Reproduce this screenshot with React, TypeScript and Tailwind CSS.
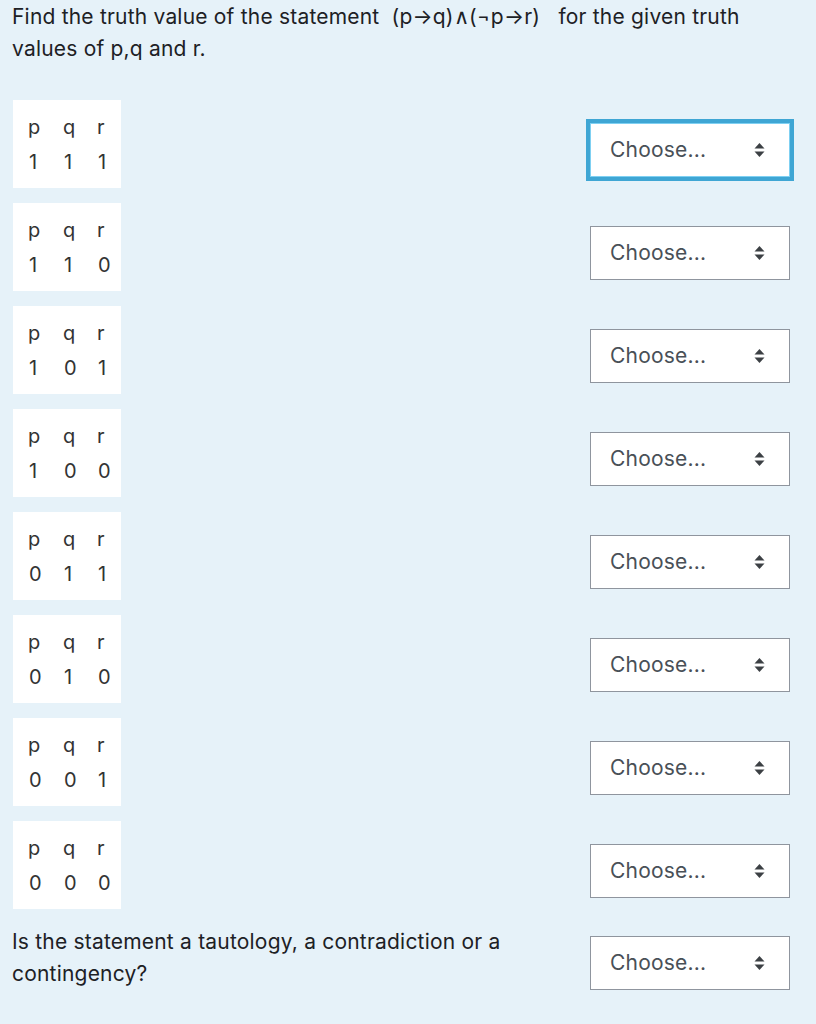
const rows = [
  ['1', '1', '1'],
  ['1', '1', '0'],
  ['1', '0', '1'],
  ['1', '0', '0'],
  ['0', '1', '1'],
  ['0', '1', '0'],
  ['0', '0', '1'],
  ['0', '0', '0'],
];

function SortIcon() {
  return (
    <svg width="11" height="16" viewBox="0 0 11 16" className="shrink-0">
      <path d="M5.5 1 L10.5 6.5 L0.5 6.5 Z" fill="#3c4044" />
      <path d="M5.5 15 L10.5 9.5 L0.5 9.5 Z" fill="#3c4044" />
    </svg>
  );
}

function Select({ focused = false }: { focused?: boolean }) {
  return (
    <div
      className={
        focused
          ? 'flex items-center justify-between w-[200px] h-[54px] bg-white border border-[#7fd0f2] outline-[4px] outline-solid outline-[#3fa6d4] pl-[19px] pr-[24px]'
          : 'flex items-center justify-between w-[200px] h-[54px] bg-white border border-[#8f959e] pl-[19px] pr-[24px]'
      }
    >
      <span className="text-[21px] tracking-[0.2px] text-[#495057]">Choose...</span>
      <SortIcon />
    </div>
  );
}

function TruthCard({ values }: { values: string[] }) {
  return (
    <div className="w-[108px] h-[88px] bg-white flex flex-col justify-center pl-[15px] text-[20px] text-[#333] leading-[35px] pt-[2px]">
      <div className="flex">
        <span className="w-[35px]">p</span>
        <span className="w-[34px]">q</span>
        <span>r</span>
      </div>
      <div className="flex">
        {values.map((v, i) => (
          <span key={i} className={i === 0 ? 'w-[35px] pl-[1px]' : i === 1 ? 'w-[34px] pl-[1px]' : 'pl-[1px]'}>
            {v}
          </span>
        ))}
      </div>
    </div>
  );
}

export default function App() {
  return (
    <div
      className="w-[816px] h-[1024px] bg-[#e6f2f9] text-[#1d2125] overflow-hidden"
      style={{ fontFamily: 'Inter, "Liberation Sans", sans-serif' }}
    >
      <div className="pl-[12px] pt-[1px] text-[21px] tracking-[0.2px] leading-[32px]">
        <p>
          Find the truth value of the statement&nbsp; (p→q)∧(¬p→r)&nbsp;&nbsp; for the given truth
        </p>
        <p>values of p,q and r.</p>
      </div>

      <div className="mt-[35px] pl-[13px] pr-[26px] flex flex-col gap-[15px]">
        {rows.map((r, i) => (
          <div key={i} className="flex items-start justify-between">
            <TruthCard values={r} />
            <div className="mt-[23px]">
              <Select focused={i === 0} />
            </div>
          </div>
        ))}
      </div>

      <div className="mt-[17px] pl-[12px] pr-[26px] flex items-start justify-between">
        <p className="text-[21px] tracking-[0.2px] leading-[32px] w-[540px]">
          Is the statement a tautology, a contradiction or a contingency?
        </p>
        <div className="mt-[10px]">
          <Select />
        </div>
      </div>
    </div>
  );
}
